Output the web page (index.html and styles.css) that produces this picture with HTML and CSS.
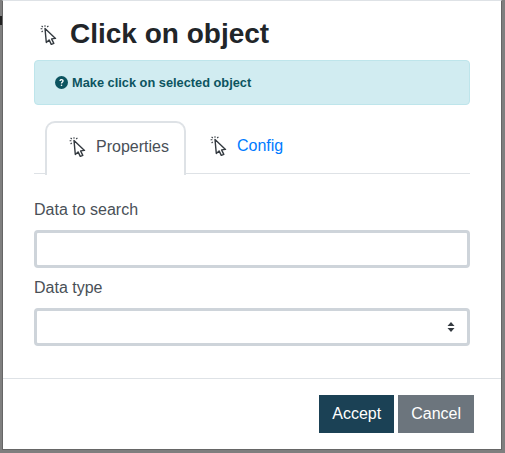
FILE: index.html
```html
<!DOCTYPE html>
<html lang="en">
<head>
    <meta charset="UTF-8">
    <title>Click on object</title>
    <link rel="stylesheet" href="styles.css">
</head>
<body>
    <svg width="0" height="0" class="defs">
        <symbol id="cursor" viewBox="0 0 18 20">
            <path d="M5 3.5 L15.5 13.4 L11.6 13.9 L13.8 18.4 L11.3 19.4 L9.1 14.9 L6.3 17.4 Z" fill="#fff" stroke="#343a40" stroke-width="1.4" stroke-linejoin="round"/>
            <path d="M5 .2V1.8M1.6 .8 2.8 2M8.4 .8 7.2 2M.6 3.8H2.4M1.6 7 2.8 5.8" fill="none" stroke="#343a40" stroke-width="1.1"/>
        </symbol>
    </svg>
    <div class="backdrop-text"></div>
    <div class="modal">
        <div class="modal-body">
            <h1 class="title">
                <svg class="icon title-icon"><use href="#cursor"/></svg>
                <span>Click on object</span>
            </h1>
            <div class="alert">
                <svg class="help" viewBox="0 0 16 16">
                    <circle cx="8" cy="8" r="8" fill="#0c5460"/>
                    <path d="M5.4 6.2C5.5 4.6 6.6 3.8 8.1 3.8 9.6 3.8 10.7 4.7 10.7 6 10.7 7.7 8.8 7.8 8.8 9.2H7.2C7.2 7.2 9 7.1 9 6.1 9 5.6 8.6 5.3 8 5.3 7.4 5.3 7 5.7 7 6.2Z" fill="#fff"/>
                    <circle cx="8" cy="11.4" r="1" fill="#fff"/>
                </svg>
                Make click on selected object
            </div>
            <div class="tabs">
                <div class="tab active">
                    <svg class="icon"><use href="#cursor"/></svg>
                    Properties
                </div>
                <div class="tab">
                    <svg class="icon"><use href="#cursor"/></svg>
                    <a href="#">Config</a>
                </div>
            </div>
            <label class="field-label" for="search">Data to search</label>
            <input class="field" id="search" type="text">
            <label class="field-label" for="type">Data type</label>
            <div class="field select" id="type">
                <svg class="arrows" viewBox="0 0 8 12">
                    <path d="M4 1 7.5 5H.5ZM4 11 .5 7H7.5Z" fill="#343a40"/>
                </svg>
            </div>
        </div>
        <div class="modal-footer">
            <button class="btn btn-accept">Accept</button>
            <button class="btn btn-cancel">Cancel</button>
        </div>
    </div>
</body>
</html>
```

FILE: styles.css
```css
html, body {
    height: 100%;
}
body {
    margin: 0;
    padding: 0 3px 3px 2px;
    box-sizing: border-box;
    background-color: #7f7f7f;
    font-family: "Liberation Sans", Arial, sans-serif;
    color: #495057;
    overflow: hidden;
}
.defs {
    position: absolute;
}
.backdrop-text {
    position: absolute;
    left: 0;
    top: 16px;
    width: 2px;
    height: 9px;
    background-color: #222;
}
.modal {
    height: 450px;
    box-sizing: border-box;
    background-color: white;
    border: 1px solid #666;
    border-top-color: #dee2e6;
}
.modal-body {
    height: 378px;
    box-sizing: border-box;
    padding: 0 31px;
    border-bottom: 1px solid #dee2e6;
}
.title {
    display: flex;
    align-items: center;
    height: 59px;
    box-sizing: border-box;
    padding-top: 7px;
    margin: 0;
    font-size: 28px;
    font-weight: bold;
    color: #212529;
}
.icon {
    width: 18px;
    height: 20px;
}
.title-icon {
    margin: 2px 12px 0 6px;
}
.alert {
    display: flex;
    align-items: center;
    height: 45px;
    box-sizing: border-box;
    padding-left: 20px;
    background-color: #d1ecf1;
    border: 1px solid #bee5eb;
    border-radius: 4px;
    font-size: 12.8px;
    font-weight: bold;
    color: #0c5460;
}
.help {
    width: 13px;
    height: 13px;
    margin-right: 4px;
}
.tabs {
    display: flex;
    height: 52px;
    margin-top: 16px;
    padding-left: 11px;
    border-bottom: 1px solid #dee2e6;
}
.tab {
    display: flex;
    align-items: center;
    gap: 9px;
    height: 52px;
    box-sizing: border-box;
    padding: 0 15px 2px 22px;
    border: 2px solid transparent;
    font-size: 16px;
}
.tab.active {
    height: 54px;
    padding-bottom: 4px;
    background-color: white;
    border-color: #dee2e6;
    border-bottom: 0;
    border-radius: 10px 10px 0 0;
}
.tab a {
    color: #007bff;
    text-decoration: none;
}
.field-label {
    display: block;
    margin-top: 26px;
    font-size: 16px;
    line-height: 19px;
}
.field-label + .field {
    margin-top: 11px;
}
.field {
    display: block;
    width: 100%;
    height: 38px;
    box-sizing: border-box;
    margin: 0;
    border: 3px solid #ced4da;
    border-radius: 4px;
    background-color: white;
}
.field + .field-label {
    margin-top: 10px;
}
.select {
    display: flex;
    align-items: center;
    justify-content: flex-end;
    padding-right: 12px;
}
.arrows {
    width: 8px;
    height: 12px;
}
.modal-footer {
    display: flex;
    justify-content: flex-end;
    gap: 4px;
    padding: 16px 27px 0 0;
}
.btn {
    height: 38px;
    padding: 0 13px;
    border: 0;
    color: white;
    font-family: inherit;
    font-size: 16px;
}
.btn-accept {
    background-color: #1b4155;
}
.btn-cancel {
    background-color: #6c757d;
}
```
